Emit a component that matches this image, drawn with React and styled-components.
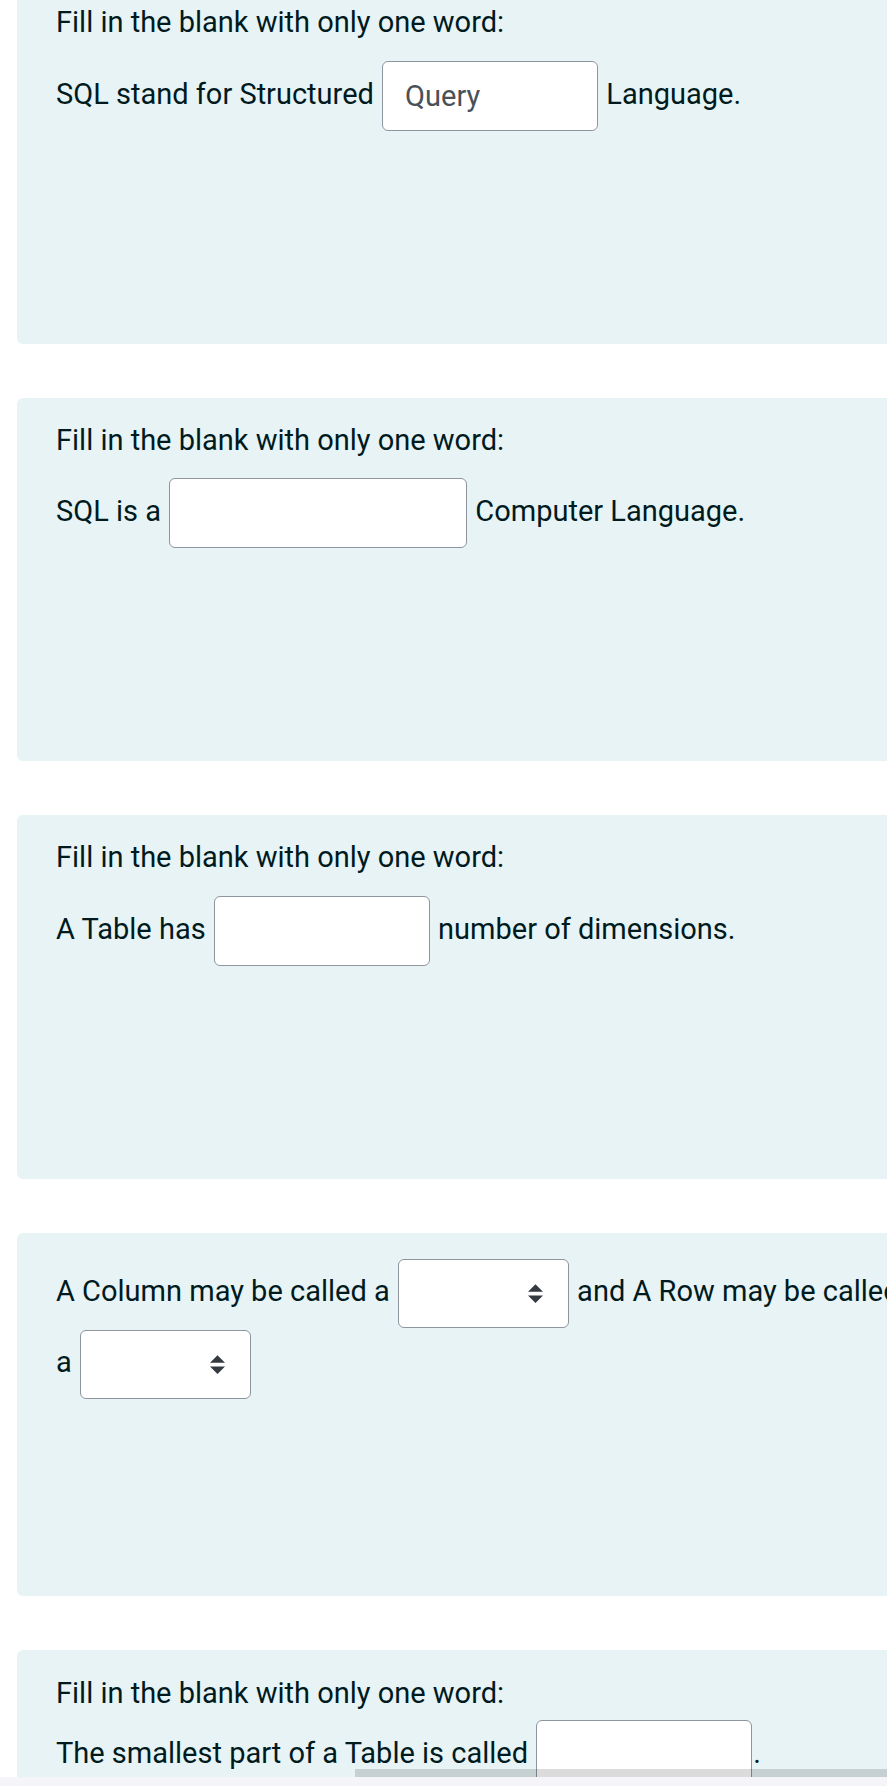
import React from 'react';
import styled, { createGlobalStyle } from 'styled-components';

const GlobalStyle = createGlobalStyle`
	html, body {
		margin: 0;
		padding: 0;
		background: #ffffff;
	}
	body {
		font-family: Roboto, "Noto Sans", "Liberation Sans", sans-serif;
		color: #001a1e;
	}
`;

const Viewport = styled.div`
	position: relative;
	width: 100vw;
	height: 100vh;
	overflow: hidden;
	background: #ffffff;
`;

const Page = styled.div`
	margin-top: -20px;
	padding-left: 17px;
`;

const Card = styled.div`
	box-sizing: border-box;
	width: 1030px;
	height: 363.5px;
	margin-bottom: 54px;
	padding: ${props => props.$top || 21}px 40px 0 39px;
	background: #e7f3f5;
	border-radius: 6px;
	font-size: 29px;
	line-height: 1.5;
`;

const Prompt = styled.p`
	margin: 0 0 ${props => props.$gap}px 0;
`;

const Line = styled.div`
	margin: 0;
`;

const NoWrap = styled.span`
	white-space: nowrap;
`;

const Blank = styled.input`
	box-sizing: border-box;
	width: ${props => props.$w}px;
	height: 70px;
	margin: 0 1px;
	padding: 0 22px;
	vertical-align: middle;
	background: #ffffff;
	border: 1px solid #8f959e;
	border-radius: 6px;
	font-family: inherit;
	font-size: 29px;
	color: #495057;
	outline: none;
`;

const SelectBox = styled.span`
	box-sizing: border-box;
	display: inline-flex;
	align-items: center;
	justify-content: flex-end;
	width: 171px;
	height: 69px;
	margin: 1px 1px;
	padding-right: 25px;
	vertical-align: middle;
	background: #ffffff;
	border: 1px solid #8f959e;
	border-radius: 6px;
`;

const ScrollTrack = styled.div`
	position: absolute;
	left: 0;
	right: 0;
	bottom: 0;
	height: 9px;
	background: #f4f4f9;
`;

const ScrollThumb = styled.div`
	position: absolute;
	left: 355px;
	right: 0;
	bottom: 9px;
	height: 8px;
	background: rgba(0, 0, 0, 0.14);
`;

const Select = () => (
	<SelectBox>
		<svg width="15" height="19" viewBox="0 0 4 5">
			<path fill="#343a40" d="M2 0L0 2h4zm0 5L0 3h4z" />
		</svg>
	</SelectBox>
);

export default function App() {
	return (
		<Viewport>
			<GlobalStyle />
			<Page>
				<Card>
					<Prompt $gap={16}>Fill in the blank with only one word:</Prompt>
					<Line>
						SQL stand for Structured <Blank $w={216} defaultValue="Query" /> Language.
					</Line>
				</Card>

				<Card>
					<Prompt $gap={16}>Fill in the blank with only one word:</Prompt>
					<Line>
						SQL is a <Blank $w={298} defaultValue="" /> Computer Language.
					</Line>
				</Card>

				<Card>
					<Prompt $gap={16}>Fill in the blank with only one word:</Prompt>
					<Line>
						A Table has <Blank $w={216} defaultValue="" /> number of dimensions.
					</Line>
				</Card>

				<Card $top={25}>
					<Line>
						A Column may be called a <Select /> and A Row may be called{' '}
						<NoWrap>a <Select /></NoWrap>
					</Line>
				</Card>

				<Card $top={22}>
					<Prompt $gap={4}>Fill in the blank with only one word:</Prompt>
					<Line>
						The smallest part of a Table is called <Blank $w={216} defaultValue="" />.
					</Line>
				</Card>
			</Page>
			<ScrollThumb />
			<ScrollTrack />
		</Viewport>
	);
}
